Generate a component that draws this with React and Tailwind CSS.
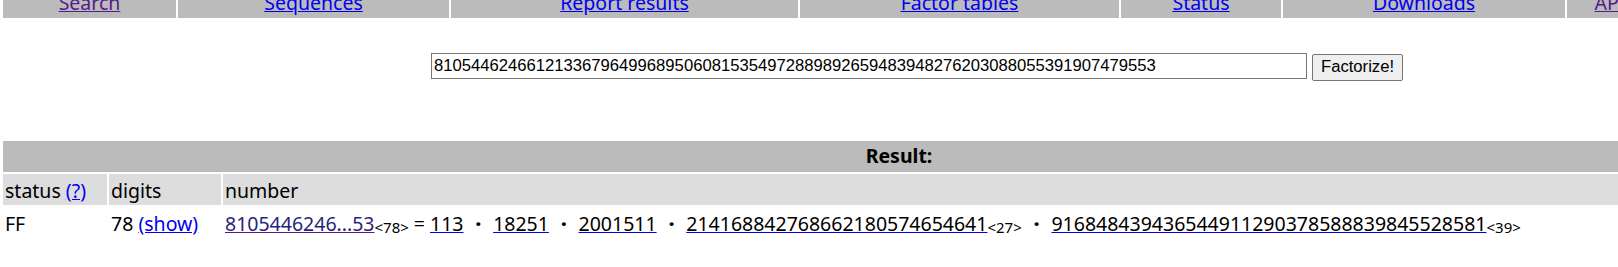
import React from "react"

const navItems = [
  { label: "Search", w: "w-[173px]", visited: true },
  { label: "Sequences", w: "w-[271px]" },
  { label: "Report results", w: "w-[347px]" },
  { label: "Factor tables", w: "w-[319px]" },
  { label: "Status", w: "w-[160px]" },
  { label: "Downloads", w: "w-[282px]" },
  { label: "API", w: "w-[86px]", visited: true },
]

const factors = [
  { n: "113" },
  { n: "18251" },
  { n: "2001511" },
  { n: "214168842768662180574654641", sub: "27" },
  { n: "916848439436544911290378588839845528581", sub: "39" },
]

function Dot() {
  return <span className="inline-block px-[12px] text-black font-black">·</span>
}

export default function App() {
  return (
    <div className="w-[1618px] h-[267px] overflow-hidden bg-white text-black font-['Noto_Sans',sans-serif] text-[19.5px] leading-[26px]">
      <div className="w-[1795px] pl-[3px]">
        {/* Menu (page is scrolled, top half hidden) */}
        <div className="flex gap-[2px] h-[36px] -mt-[18.5px]">
          {navItems.map((item) => (
            <div
              key={item.label}
              className={`${item.w} shrink-0 bg-[#bbbbbb] flex items-end justify-center pb-[1.5px]`}
            >
              <a
                href="#"
                className={
                  item.visited
                    ? "underline text-[#551a8b] decoration-[#551a8b]"
                    : "underline text-[#0000ee] decoration-[#0000ee]"
                }
              >
                {item.label}
              </a>
            </div>
          ))}
        </div>

        {/* Search form */}
        <div className="mt-[35.5px] h-[26px] flex items-start gap-[5px] pl-[428px] font-['Liberation_Sans',Arial,sans-serif] text-[16.65px]">
          <input
            type="text"
            readOnly
            value="810544624661213367964996895060815354972889892659483948276203088055391907479553"
            className="w-[876px] h-[26px] border border-[#767676] px-[2px] text-black outline-none leading-none"
          />
          <button className="h-[27px] mt-[0.5px] px-[8px] bg-[#efefef] border border-[#767676] rounded-[2px] text-black leading-none">
            Factorize!
          </button>
        </div>

        {/* Result table */}
        <div className="mt-[61.5px] flex flex-col gap-[2px]">
          <div className="h-[31.5px] bg-[#bbbbbb] flex items-center justify-center font-bold">
            Result:
          </div>
          <div className="flex gap-[2px] h-[31px]">
            <div className="w-[104px] bg-[#dddddd] pl-[2px] flex items-center pt-[2px]">
              status&nbsp;
              <a href="#" className="underline text-[#0000ee]">(?)</a>
            </div>
            <div className="w-[112px] bg-[#dddddd] pl-[2px] flex items-center pt-[2px]">digits</div>
            <div className="flex-1 bg-[#dddddd] pl-[2px] flex items-center pt-[2px]">number</div>
          </div>
          <div className="flex gap-[2px] h-[31px] pt-[2px] whitespace-nowrap">
            <div className="w-[104px] pl-[2px] flex items-center">FF</div>
            <div className="w-[112px] pl-[2px] flex items-center">
              78&nbsp;
              <a href="#" className="underline text-[#0000ee]">(show)</a>
            </div>
            <div className="flex-1 pl-[2px] flex items-center">
              <a href="#" className="underline text-[#2a1f7a] decoration-[#551a8b]">8105446246...53</a>
              <sub className="text-[15px] leading-none">&lt;78&gt;</sub>
              <span className="px-[5px]">=</span>
              {factors.map((f, i) => (
                <React.Fragment key={f.n}>
                  {i > 0 && <Dot />}
                  <a href="#" className="underline text-black decoration-[#0000ee]">{f.n}</a>
                  {f.sub && <sub className="text-[15px] leading-none">&lt;{f.sub}&gt;</sub>}
                </React.Fragment>
              ))}
            </div>
          </div>
        </div>
      </div>
    </div>
  )
}
